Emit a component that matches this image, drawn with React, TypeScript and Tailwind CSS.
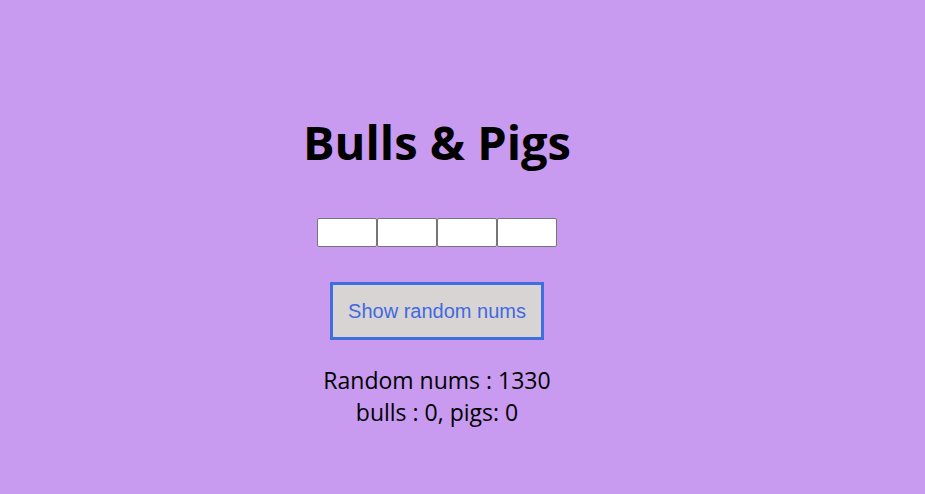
import React, { useState } from 'react';

const FONT = "font-['Comic_Sans_MS','Open_Sans',sans-serif]";

export default function App() {
  const [digits, setDigits] = useState(['', '', '', '']);
  const [shown, setShown] = useState(true);
  const secret = '1330';

  return (
    <div className={`min-h-[494px] w-full bg-[#c89af0] ${FONT} text-black`}>
      <div className="flex flex-col items-center pr-[51px] pt-[113px]">
        <h1 className="text-[47px] font-bold leading-[58px]">Bulls &amp; Pigs</h1>

        {/* four single-digit guesses */}
        <div className="mt-[47px] flex">
          {digits.map((d, i) => (
            <input
              key={i}
              value={d}
              maxLength={1}
              onChange={(e) => {
                const next = [...digits];
                next[i] = e.target.value;
                setDigits(next);
              }}
              className="h-[29px] w-[60px] rounded-[2px] border border-[#767676] bg-white px-1 text-center"
            />
          ))}
        </div>

        <button
          onClick={() => setShown(!shown)}
          className="mt-[35px] h-[58px] w-[214px] border-[3px] border-[#3f6ee0] bg-[#d9d4d4] font-['Liberation_Sans',Arial,sans-serif] text-[20px] text-[#4169e1]"
        >
          Show random nums
        </button>

        <div className="mt-[24px] text-center text-[23px] leading-[32px]">
          <p>Random nums : {shown ? secret : '????'}</p>
          <p>bulls : 0, pigs: 0</p>
        </div>
      </div>
    </div>
  );
}
